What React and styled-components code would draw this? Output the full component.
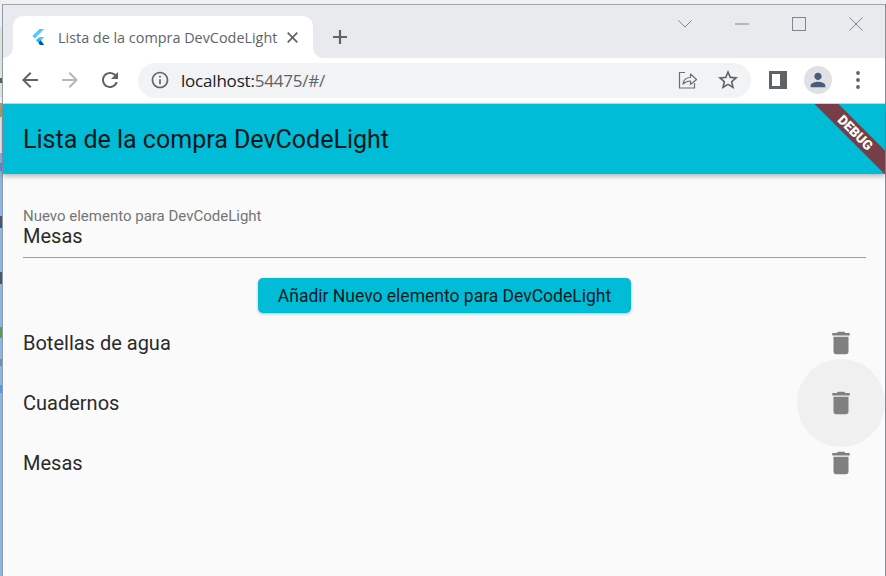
import React from 'react'
import styled, { createGlobalStyle } from 'styled-components'

const GlobalStyle = createGlobalStyle`
  html, body { margin: 0; padding: 0; height: 100%; background: #f0f0f0; }
  #root { height: 100%; }
  * { box-sizing: border-box; }
`

const Desktop = styled.div`
  display: flex;
  width: 886px;
  height: 576px;
  overflow: hidden;
  font-family: Roboto, sans-serif;
`

const Backdrop = styled.div`
  display: flex;
  flex-direction: column;
  flex: 0 0 2px;
`

const BackdropPiece = styled.div`
  height: ${p => p.$h}px;
  flex: ${p => (p.$grow ? 1 : 'none')};
  background: ${p => p.$c};
`

const Window = styled.div`
  flex: 1;
  display: flex;
  flex-direction: column;
  min-width: 0;
  margin-top: 4px;
  border-top: 1px solid #9ea3a8;
  border-left: 1px solid #8d9db0;
  border-right: 1px solid #7f8fa3;
`

const TabStrip = styled.div`
  flex: 0 0 53px;
  display: flex;
  background: #e8eaed;
  padding-left: 10px;
`

const Tab = styled.div`
  position: relative;
  display: flex;
  align-items: center;
  width: 300px;
  height: 42px;
  margin-top: 11px;
  padding: 0 15px 0 18px;
  background: #fff;
  border-radius: 10px 10px 0 0;

  &::before, &::after {
    content: '';
    position: absolute;
    bottom: 0;
    width: 10px;
    height: 10px;
  }
  &::before {
    left: -10px;
    background: radial-gradient(circle at 0 0, transparent 9.5px, #fff 10px);
  }
  &::after {
    right: -10px;
    background: radial-gradient(circle at 100% 0, transparent 9.5px, #fff 10px);
  }
`

const TabTitle = styled.span`
  flex: 1;
  margin-left: 12px;
  font-family: "Open Sans", sans-serif;
  font-size: 14.4px;
  color: #5f6368;
  white-space: nowrap;
`

const NewTab = styled.div`
  display: flex;
  align-items: center;
  justify-content: center;
  width: 26px;
  height: 42px;
  margin: 11px 0 0 14px;
`

const WindowControls = styled.div`
  display: flex;
  height: 37px;
  margin-left: auto;
  padding-right: 1px;
`

const WindowControl = styled.div`
  display: flex;
  align-items: center;
  justify-content: center;
  width: 57px;
`

const Toolbar = styled.div`
  flex: 0 0 46px;
  display: flex;
  align-items: center;
  padding: 0 0 1px 7px;
  background: #fff;
  border-bottom: 1px solid #dadce0;
`

const NavButton = styled.div`
  display: flex;
  align-items: center;
  justify-content: center;
  flex: 0 0 40px;
  height: 36px;
`

const PanelButton = styled(NavButton)`
  margin-left: 7px;
`

const Omnibox = styled.div`
  display: flex;
  align-items: center;
  width: 613px;
  height: 35px;
  margin-left: 8px;
  padding: 0 3px 0 12px;
  background: #f1f3f4;
  border-radius: 18px;
`

const Url = styled.span`
  flex: 1;
  margin-left: 11px;
  font-family: "Open Sans", sans-serif;
  font-size: 17px;
  letter-spacing: -0.2px;
  color: #5f6368;
  white-space: nowrap;

  b {
    font-weight: 400;
    color: #202124;
  }
`

const Avatar = styled.div`
  display: flex;
  align-items: center;
  justify-content: center;
  width: 28px;
  height: 28px;
  margin: 0 6px;
  border-radius: 50%;
  background: #dfe1e5;
`

const AppBar = styled.header`
  position: relative;
  z-index: 1;
  flex: 0 0 70px;
  display: flex;
  align-items: center;
  padding-left: 20px;
  background: #00bcd6;
  box-shadow: 0 2px 5px rgba(0, 0, 0, 0.3);
`

const AppTitle = styled.h1`
  margin: 0;
  font-size: 25px;
  font-weight: 400;
  color: #000;
  opacity: 0.87;
`

const BannerClip = styled.div`
  position: absolute;
  top: 0;
  right: 0;
  width: 72px;
  height: 70px;
  overflow: hidden;
`

const Banner = styled.div`
  position: absolute;
  top: 21.5px;
  left: -11px;
  width: 110px;
  height: 17px;
  padding-right: 5px;
  line-height: 17px;
  transform: rotate(45deg);
  background: #763f47;
  color: #fff;
  font-size: 13.5px;
  font-weight: 900;
  text-align: center;
`

const Content = styled.main`
  flex: 1;
  display: flex;
  flex-direction: column;
  background: #fafafa;
`

const Field = styled.div`
  margin: 35px 19px 0 20px;
  padding-bottom: 9px;
  border-bottom: 1.25px solid #9e9e9e;
`

const FieldLabel = styled.div`
  font-size: 15px;
  line-height: 15px;
  color: #757575;
`

const FieldValue = styled.div`
  font-size: 20px;
  line-height: 24px;
  color: #2a2a2a;
`

const AddButton = styled.button`
  align-self: center;
  height: 35px;
  margin: 20px 0 0 1px;
  padding: 0 20px;
  border: none;
  border-radius: 5px;
  background: #00bcd6;
  box-shadow: 0 1px 3px rgba(0, 0, 0, 0.25);
  font-family: Roboto, sans-serif;
  font-size: 17.5px;
  color: rgba(0, 0, 0, 0.87);
`

const ItemList = styled.ul`
  margin: 0;
  padding: 0;
  list-style: none;
`

const Item = styled.li`
  display: flex;
  align-items: center;
  justify-content: space-between;
  height: 60px;
  padding: 0 29px 0 20px;
  font-size: 20px;
  color: #2a2a2a;
`

const DeleteButton = styled.div`
  position: relative;
  display: flex;
  width: 30px;
  height: 30px;

  &::before {
    content: '';
    display: ${p => (p.$hovered ? 'block' : 'none')};
    position: absolute;
    top: -29px;
    left: -29px;
    width: 88px;
    height: 88px;
    border-radius: 50%;
    background: #f0f0f0;
  }

  svg { position: relative; }
`

const Icon = ({ d, size = 24, color = '#5f6368' }) => (
  <svg width={size} height={size} viewBox="0 0 24 24" fill={color}>
    <path d={d} />
  </svg>
)

const FlutterLogo = () => (
  <svg width="15" height="17" viewBox="0 0 16 18">
    <polygon points="9,0 14,0 4,10 1.5,7.5" fill="#54c5f8" />
    <polygon points="9,8.5 14,8.5 8,14.5 5.5,12" fill="#54c5f8" />
    <polygon points="5.5,12 8,9.5 10.5,12 8,14.5" fill="#29b6f6" />
    <polygon points="8,14.5 10.5,12 14,17 9.5,17" fill="#01579b" />
  </svg>
)

const backdrop = [
  [27, '#eeeeee'], [51, '#dfe3d6'], [5, '#6b5560'], [14, '#dfe3d6'], [6, '#ececec'],
  [14, '#a3a660'], [36, '#e4e8ee'], [10, '#8fb4de'], [8, '#5d90d8'], [45, '#8fb4de'],
  [12, '#4d5568'], [44, '#8fb4de'], [12, '#4d5568'], [43, '#8fb4de'], [11, '#5f9a4e'],
  [21, '#8fb4de'], [7, '#7d8da0'], [19, '#8fb4de'], [8, '#4f9ae8'],
]

const items = ['Botellas de agua', 'Cuadernos', 'Mesas']

const TRASH = 'M6 19c0 1.1.9 2 2 2h8c1.1 0 2-.9 2-2V7H6v12zM19 4h-3.5l-1-1h-5l-1 1H5v2h14V4z'

export default function App() {
  return (
    <Desktop>
      <GlobalStyle />
      <Backdrop>
        {backdrop.map(([h, c], i) => <BackdropPiece key={i} $h={h} $c={c} />)}
        <BackdropPiece $grow $c="#8fb4de" />
      </Backdrop>
      <Window>
        <TabStrip>
          <Tab>
            <FlutterLogo />
            <TabTitle>Lista de la compra DevCodeLight</TabTitle>
            <svg width="11" height="11" viewBox="0 0 11 11" stroke="#5f6368" strokeWidth="1.7">
              <path d="M.7.7l9.6 9.6M10.3.7L.7 10.3" />
            </svg>
          </Tab>
          <NewTab>
            <svg width="16" height="16" viewBox="0 0 16 16" stroke="#5f6368" strokeWidth="2.2">
              <path d="M8 1v14M1 8h14" />
            </svg>
          </NewTab>
          <WindowControls>
            <WindowControl>
              <svg width="14" height="8" viewBox="0 0 14 8" fill="none" stroke="#80868b">
                <path d="M.5.5L7 7 13.5.5" />
              </svg>
            </WindowControl>
            <WindowControl>
              <svg width="14" height="2" viewBox="0 0 14 2" stroke="#80868b"><path d="M0 1h14" /></svg>
            </WindowControl>
            <WindowControl>
              <svg width="14" height="14" viewBox="0 0 14 14" fill="none" stroke="#80868b"><rect x=".5" y=".5" width="13" height="13" /></svg>
            </WindowControl>
            <WindowControl>
              <svg width="14" height="14" viewBox="0 0 14 14" stroke="#80868b"><path d="M.5.5l13 13M13.5.5l-13 13" /></svg>
            </WindowControl>
          </WindowControls>
        </TabStrip>
        <Toolbar>
          <NavButton><Icon d="M20 11H7.83l5.59-5.59L12 4l-8 8 8 8 1.41-1.41L7.83 13H20v-2z" /></NavButton>
          <NavButton><Icon color="#b4b6b9" d="M4 11h12.17l-5.59-5.59L12 4l8 8-8 8-1.41-1.41L16.17 13H4v-2z" /></NavButton>
          <NavButton><Icon d="M17.65 6.35C16.2 4.9 14.21 4 12 4c-4.42 0-7.99 3.58-7.99 8s3.57 8 7.99 8c3.73 0 6.84-2.55 7.73-6h-2.08c-.82 2.33-3.04 4-5.65 4-3.31 0-6-2.69-6-6s2.69-6 6-6c1.66 0 3.14.69 4.22 1.78L13 11h7V4l-2.35 2.35z" /></NavButton>
          <Omnibox>
            <Icon size={20} d="M11 7h2v2h-2zm0 4h2v6h-2zm1-9C6.48 2 2 6.48 2 12s4.48 10 10 10 10-4.48 10-10S17.52 2 12 2zm0 18c-4.41 0-8-3.59-8-8s3.59-8 8-8 8 3.59 8 8-3.59 8-8 8z" />
            <Url><b>localhost:</b>54475/#/</Url>
            <NavButton>
              <svg width="20" height="20" viewBox="0 0 20 20" fill="none" stroke="#6b6f73" strokeWidth="1.2">
                <path d="M7 2.5H1.5V18h15v-5" />
                <path d="M5 14c.5-4 3.5-6.5 7.5-6.5V4l6 5.5-6 5v-3.5C9 11 7 12 5 14z" strokeLinejoin="round" />
              </svg>
            </NavButton>
            <NavButton><Icon d="M22 9.24l-7.19-.62L12 2 9.19 8.63 2 9.24l5.46 4.73L5.82 21 12 17.27 18.18 21l-1.63-7.03L22 9.24zM12 15.4l-3.76 2.27 1-4.28-3.32-2.88 4.38-.38L12 6.1l1.71 4.04 4.38.38-3.32 2.88 1 4.28L12 15.4z" /></NavButton>
          </Omnibox>
          <PanelButton>
            <svg width="18" height="18" viewBox="0 0 18 18">
              <path fill="#5f6368" fillRule="evenodd" d="M0 0h18v18H0zM3 3v12h8V3z" />
            </svg>
          </PanelButton>
          <Avatar><Icon size={22} color="#4a5a78" d="M12 12c2.21 0 4-1.79 4-4s-1.79-4-4-4-4 1.79-4 4 1.79 4 4 4zm0 2c-2.67 0-8 1.34-8 4v2h16v-2c0-2.66-5.33-4-8-4z" /></Avatar>
          <NavButton>
            <svg width="4" height="18" viewBox="0 0 4 18" fill="#5f6368">
              <circle cx="2" cy="2" r="1.9" /><circle cx="2" cy="9" r="1.9" /><circle cx="2" cy="16" r="1.9" />
            </svg>
          </NavButton>
        </Toolbar>
        <AppBar>
          <AppTitle>Lista de la compra DevCodeLight</AppTitle>
          <BannerClip><Banner>DEBUG</Banner></BannerClip>
        </AppBar>
        <Content>
          <Field>
            <FieldLabel>Nuevo elemento para DevCodeLight</FieldLabel>
            <FieldValue>Mesas</FieldValue>
          </Field>
          <AddButton>Añadir Nuevo elemento para DevCodeLight</AddButton>
          <ItemList>
            {items.map((name, i) => (
              <Item key={name}>
                {name}
                <DeleteButton $hovered={i === 1}>
                  <Icon size={30} color="#808080" d={TRASH} />
                </DeleteButton>
              </Item>
            ))}
          </ItemList>
        </Content>
      </Window>
    </Desktop>
  )
}
